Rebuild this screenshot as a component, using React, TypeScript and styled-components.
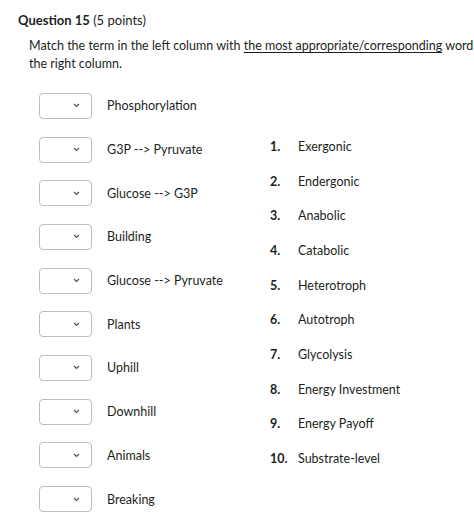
import { createGlobalStyle, styled } from "styled-components";

const GlobalStyle = createGlobalStyle`
  body {
    margin: 0;
    background: #ffffff;
    font-family: Lato, "Open Sans", sans-serif;
    color: #1c1f21;
    overflow: hidden;
  }
`;

const Page = styled.div`
  width: 520px;
  padding: 11px 0 0 18px;
`;

const Title = styled.div`
  font-size: 13px;
  line-height: 18px;
`;

const Bold = styled.span`
  font-weight: 700;
`;

const Instructions = styled.p`
  margin: 8px 0 0 11px;
  width: 470px;
  font-size: 12.5px;
  line-height: 18px;
`;

const Underlined = styled.span`
  text-decoration: underline;
  text-underline-offset: 2px;
`;

const Matching = styled.div`
  display: grid;
  grid-template-columns: 231px 1fr;
  align-items: center;
  margin: 11px 0 0 21px;
`;

const LeftList = styled.div`
  display: flex;
  flex-direction: column;
`;

const LeftRow = styled.div`
  display: flex;
  align-items: center;
  height: 43.7px;
  gap: 15px;
`;

const SelectBox = styled.div`
  box-sizing: border-box;
  width: 53px;
  height: 26px;
  border: 1px solid #b9bec2;
  border-radius: 4px;
  display: flex;
  align-items: center;
  justify-content: flex-end;
  padding-right: 11px;
`;

const Term = styled.span`
  font-size: 12.5px;
`;

const RightList = styled.ol`
  list-style: none;
  margin: 0;
  padding: 0;
  display: flex;
  flex-direction: column;
`;

const RightItem = styled.li`
  display: flex;
  align-items: center;
  height: 34.7px;
  font-size: 12.5px;
`;

const Num = styled.span`
  width: 28px;
  font-weight: 700;
`;

const Chevron = () => (
  <svg width="7" height="5" viewBox="0 0 7 5">
    <path d="M1 1l2.5 2.5L6 1" fill="none" stroke="#4a4f53" strokeWidth="1.1" />
  </svg>
);

const terms = [
  "Phosphorylation",
  "G3P --> Pyruvate",
  "Glucose --> G3P",
  "Building",
  "Glucose --> Pyruvate",
  "Plants",
  "Uphill",
  "Downhill",
  "Animals",
  "Breaking",
];

const answers = [
  "Exergonic",
  "Endergonic",
  "Anabolic",
  "Catabolic",
  "Heterotroph",
  "Autotroph",
  "Glycolysis",
  "Energy Investment",
  "Energy Payoff",
  "Substrate-level",
];

export default function App() {
  return (
    <>
      <GlobalStyle />
      <Page>
        <Title>
          <Bold>Question 15</Bold> (5 points)
        </Title>
        <Instructions>
          Match the term in the left column with{" "}
          <Underlined>the most appropriate/corresponding</Underlined> word in
          the right column.
        </Instructions>
        <Matching>
          <LeftList>
            {terms.map((t) => (
              <LeftRow key={t}>
                <SelectBox>
                  <Chevron />
                </SelectBox>
                <Term>{t}</Term>
              </LeftRow>
            ))}
          </LeftList>
          <RightList>
            {answers.map((a, i) => (
              <RightItem key={a}>
                <Num>{i + 1}.</Num>
                {a}
              </RightItem>
            ))}
          </RightList>
        </Matching>
      </Page>
    </>
  );
}
